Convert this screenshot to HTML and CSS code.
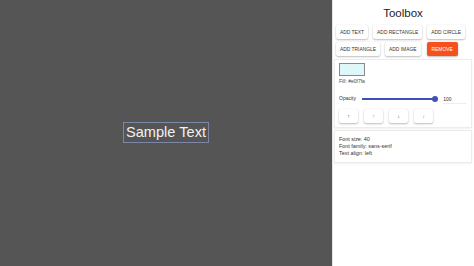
FILE: index.html
```html
<!DOCTYPE html>
<html>
<head>
<meta charset="utf-8">
<link rel="stylesheet" href="styles.css">
</head>
<body>
<div class="app">
  <div class="canvas">
    <div class="selection"><span class="sample">Sample Text</span></div>
  </div>
  <aside class="sidebar">
    <h1 class="title">Toolbox</h1>
    <div class="actions">
      <button class="btn">Add Text</button>
      <button class="btn">Add Rectangle</button>
      <button class="btn">Add Circle</button>
      <button class="btn">Add Triangle</button>
      <button class="btn">Add Image</button>
      <button class="btn btn-danger">Remove</button>
    </div>
    <div class="card">
      <div class="swatch"></div>
      <div class="fill-label">Fill: #e0f7fa</div>
      <div class="opacity-row">
        <span class="label">Opacity</span>
        <div class="slider"><div class="track"></div><div class="thumb"></div></div>
        <span class="value">100</span>
      </div>
      <div class="order-row">
        <button class="btn small">↑</button>
        <button class="btn small faint">↑</button>
        <button class="btn small">↓</button>
        <button class="btn small faint">↓</button>
      </div>
    </div>
    <div class="card info">
      <div>Font size: 40</div>
      <div>Font family: sans-serif</div>
      <div>Text align: left</div>
    </div>
  </aside>
</div>
</body>
</html>
```

FILE: styles.css
```css
* { box-sizing: border-box; }
html, body { margin: 0; padding: 0; }
body {
  width: 474px;
  height: 266px;
  font-family: "Liberation Sans", Arial, sans-serif;
  overflow: hidden;
}
.app {
  display: flex;
  width: 474px;
  height: 266px;
}
.canvas {
  width: 332px;
  height: 266px;
  background: #555555;
  display: flex;
  align-items: center;
  justify-content: center;
}
.selection {
  border: 1px solid #7c86a8;
  padding: 1px 2px 2px 2px;
  line-height: 1;
  margin-top: -1px;
}
.sample {
  display: block;
  color: #f2f2f2;
  font-size: 14.6px;
  line-height: 16px;
}
.sidebar {
  width: 142px;
  height: 266px;
  background: #ffffff;
  border-left: 1px solid #e6e6e6;
  padding: 0 2px 0 1px;
}
.title {
  margin: 0;
  font-weight: normal;
  font-size: 11.5px;
  text-align: center;
  color: #222;
  padding-top: 7px;
  height: 25px;
}
.actions {
  display: flex;
  flex-wrap: wrap;
  column-gap: 5px;
  row-gap: 3px;
  padding-left: 2px;
}
.btn {
  font-family: "Liberation Sans", Arial, sans-serif;
  font-size: 4.9px;
  text-transform: uppercase;
  color: #333;
  background: #fff;
  border: none;
  border-radius: 2px;
  height: 14px;
  padding: 0 4px;
  box-shadow: 0 1px 2px rgba(0,0,0,0.25), 0 0 1px rgba(0,0,0,0.15);
  margin: 0;
}
.btn-danger {
  background: #f4511e;
  color: #fff;
  padding: 0 5px;
  margin-left: 1px;
}
.card {
  border: 1px solid #ececec;
  box-shadow: 0 1px 2px rgba(0,0,0,0.06);
  margin-top: 3px;
  padding: 3px 4px 4px 4px;
}
.swatch {
  width: 26px;
  height: 13px;
  background: #e0f7fa;
  border: 1px solid #8a8a8a;
}
.fill-label {
  font-size: 5px;
  color: #444;
  margin-top: 2px;
}
.opacity-row {
  display: flex;
  align-items: center;
  margin-top: 8px;
  height: 12px;
}
.label, .value {
  font-size: 5px;
  color: #333;
}
.slider {
  position: relative;
  width: 74px;
  height: 8px;
  margin-left: 6px;
  margin-top: 2px;
}
.track {
  position: absolute;
  left: 0;
  right: 0;
  top: 3px;
  height: 1.5px;
  background: #3f51b5;
}
.thumb {
  position: absolute;
  right: -3px;
  top: 1px;
  width: 6px;
  height: 6px;
  border-radius: 50%;
  background: #3f51b5;
}
.value {
  margin-left: 8px;
  margin-top: 3px;
  padding-bottom: 1px;
  border-bottom: 1px solid #eee;
  width: 24px;
}
.order-row {
  display: flex;
  gap: 6px;
  margin-top: 5px;
}
.btn.small {
  width: 19px;
  height: 14px;
  padding: 0;
  font-size: 5.5px;
}
.btn.faint { color: #888; }
.info {
  margin-top: 2px;
  padding: 5px 4px 5px 4px;
  font-size: 5.4px;
  line-height: 7px;
  color: #333;
}
```
